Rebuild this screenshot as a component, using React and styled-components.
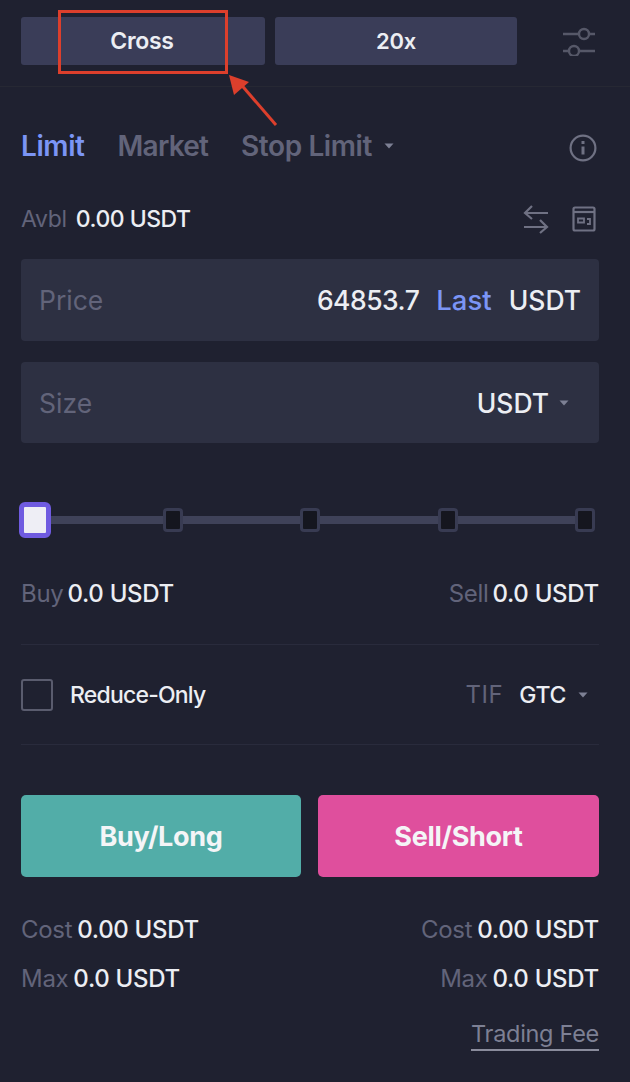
import React from "react";
import styled, { createGlobalStyle } from "styled-components";

const GlobalStyle = createGlobalStyle`
  html, body {
    margin: 0;
    padding: 0;
    background: #1f2130;
  }
  * {
    box-sizing: border-box;
  }
`;

const Caret = ({ color = "#7d8094" }) => (
  <CaretIcon width="10" height="6" viewBox="0 0 10 6">
    <path d="M0.5 0.5h9L5 5.5z" fill={color} />
  </CaretIcon>
);

const SliderIcon = () => (
  <svg width="36" height="30" viewBox="0 0 36 30" fill="none" stroke="#565868" strokeWidth="2.4">
    <path d="M2 8h16M28 8h6M2 25h6M18 25h16" />
    <circle cx="23" cy="8" r="5" />
    <circle cx="13" cy="25" r="5" />
  </svg>
);

const InfoIcon = () => (
  <svg width="28" height="28" viewBox="0 0 28 28" fill="none" stroke="#6f7183" strokeWidth="2.2">
    <circle cx="14" cy="14" r="12.4" />
    <path d="M14 12.5v8" strokeWidth="3" />
    <path d="M14 7v3" strokeWidth="3" />
  </svg>
);

const SwapIcon = () => (
  <svg width="28" height="30" viewBox="0 0 28 30" fill="none" stroke="#6f7183" strokeWidth="2.2">
    <path d="M26 9H3M10 2 3 9l7 6" />
    <path d="M2 23h23M18 16l7 7-7 6" />
  </svg>
);

const CalcIcon = () => (
  <svg width="24" height="26" viewBox="0 0 24 26" fill="none" stroke="#6f7183" strokeWidth="2.2">
    <rect x="1.5" y="1.5" width="21" height="23" rx="1.5" />
    <path d="M2 6h20" />
    <path d="M6 12.5h6v4H6zM15 13h3M15 18h3M18 12v7" strokeWidth="1.8" />
  </svg>
);

const App = () => {
  return (
    <>
      <GlobalStyle />
      <Panel>
        <TopBar>
          <MarginButton $width={244}>
            <CrossText>Cross</CrossText>
          </MarginButton>
          <MarginButton $width={242}>20x</MarginButton>
          <TopIcon>
            <SliderIcon />
          </TopIcon>
        </TopBar>

        <Callout />
        <CalloutArrow width="60" height="60" viewBox="0 0 60 60" fill="none">
          <path d="M50 50 12 6" stroke="#dc3f2c" strokeWidth="3" />
          <path d="M3 0l20 7-15 13z" fill="#dc3f2c" />
        </CalloutArrow>

        <Form>
          <Tabs>
            <Tab $active>Limit</Tab>
            <Tab $tight>Market</Tab>
            <Tab>
              Stop Limit <Caret />
            </Tab>
            <TabInfo>
              <InfoIcon />
            </TabInfo>
          </Tabs>

          <AvblRow>
            <AvblPair>
              <AvblLabel>Avbl</AvblLabel>
              <AvblValue>0.00 USDT</AvblValue>
            </AvblPair>
            <AvblIcons>
              <SwapIcon />
              <CalcIcon />
            </AvblIcons>
          </AvblRow>

          <Field>
            <FieldLabel>Price</FieldLabel>
            <FieldRight>
              <PriceValue>64853.7</PriceValue>
              <FieldLink>Last</FieldLink>
              <FieldValue>USDT</FieldValue>
            </FieldRight>
          </Field>
          <SizeField>
            <FieldLabel>Size</FieldLabel>
            <SizeRight>
              <FieldValue>USDT</FieldValue>
              <Caret />
            </SizeRight>
          </SizeField>

          <Slider>
            <Thumb />
            <Track />
            <Tick />
            <Track />
            <Tick />
            <Track />
            <Tick />
            <Track />
            <Tick />
          </Slider>

          <SplitRow>
            <SplitPair>
              <Label>Buy</Label>
              <Value>0.0 USDT</Value>
            </SplitPair>
            <SplitPair>
              <Label>Sell</Label>
              <Value>0.0 USDT</Value>
            </SplitPair>
          </SplitRow>

          <OptionsRow>
            <CheckWrap>
              <Checkbox />
              <CheckText>Reduce-Only</CheckText>
            </CheckWrap>
            <TifWrap>
              <TifLabel>TIF</TifLabel>
              <TifValue>GTC</TifValue>
              <Caret />
            </TifWrap>
          </OptionsRow>

          <Actions>
            <ActionButton $bg="#52ada8">Buy/Long</ActionButton>
            <ActionButton $bg="#df4f9d">Sell/Short</ActionButton>
          </Actions>

          <Summary>
            <SummaryRow>
              <Pair>
                <Label>Cost</Label>
                <Value>0.00 USDT</Value>
              </Pair>
              <Pair>
                <Label>Cost</Label>
                <Value>0.00 USDT</Value>
              </Pair>
            </SummaryRow>
            <SummaryRow>
              <Pair>
                <Label>Max</Label>
                <Value>0.0 USDT</Value>
              </Pair>
              <Pair>
                <Label>Max</Label>
                <Value>0.0 USDT</Value>
              </Pair>
            </SummaryRow>
          </Summary>

          <FeeRow>
            <FeeLink>Trading Fee</FeeLink>
          </FeeRow>
        </Form>
      </Panel>
    </>
  );
};

const Panel = styled.div`
  position: relative;
  width: 630px;
  height: 1082px;
  overflow: hidden;
  background: #1f2130;
  color: #eceef3;
  font-family: Inter, "Liberation Sans", sans-serif;
`;

const TopBar = styled.div`
  display: flex;
  align-items: flex-start;
  gap: 10px;
  height: 87px;
  padding: 17px 33px 0 21px;
  border-bottom: 1px solid #262833;
`;

const MarginButton = styled.div`
  flex: 0 0 ${(p) => p.$width}px;
  height: 48px;
  display: flex;
  align-items: center;
  justify-content: center;
  border-radius: 3px;
  background: #3a3d58;
  font-size: 22px;
  font-weight: 600;
  letter-spacing: -0.3px;
`;

const CrossText = styled.span`
  margin-right: 2px;
  font-size: 23px;
`;

const TopIcon = styled.div`
  margin-left: auto;
  height: 48px;
  display: flex;
  align-items: center;
`;

const Callout = styled.div`
  position: absolute;
  left: 58px;
  top: 10px;
  width: 170px;
  height: 64px;
  border: 3px solid #dc3f2c;
`;

const CalloutArrow = styled.svg`
  position: absolute;
  left: 226px;
  top: 75px;
`;

const Form = styled.div`
  padding: 0 31px 0 21px;
`;

const Tabs = styled.div`
  display: flex;
  align-items: center;
  gap: 33px;
  height: 40px;
  margin-top: 39px;
`;

const Tab = styled.div`
  display: flex;
  align-items: center;
  gap: 12px;
  font-size: 28px;
  font-weight: 600;
  letter-spacing: ${(p) => (p.$tight ? "-0.8px" : "-0.4px")};
  color: ${(p) => (p.$active ? "#7b95f5" : "#62647a")};
`;

const TabInfo = styled.div`
  margin-left: auto;
  margin-top: 4px;
  margin-right: 2px;
  display: flex;
`;

const CaretIcon = styled.svg`
  flex: none;
`;

const AvblRow = styled.div`
  display: flex;
  align-items: center;
  justify-content: space-between;
  height: 32px;
  margin-top: 37px;
`;

const AvblIcons = styled.div`
  display: flex;
  align-items: center;
  gap: 22px;
  margin-right: 3px;
`;

const Pair = styled.div`
  display: flex;
  align-items: baseline;
  gap: 5px;
  white-space: nowrap;
`;

const AvblPair = styled(Pair)`
  gap: 9px;
`;

const SplitPair = styled(Pair)`
  gap: 4px;
`;

const Label = styled.span`
  font-size: 24px;
  color: #62647a;
  letter-spacing: -0.3px;
`;

const AvblLabel = styled(Label)`
  font-size: 23px;
`;

const Value = styled.span`
  font-size: 24px;
  font-weight: 500;
  letter-spacing: -0.3px;
`;

const AvblValue = styled(Value)`
  font-size: 23px;
  letter-spacing: -0.5px;
`;

const Field = styled.div`
  display: flex;
  align-items: center;
  justify-content: space-between;
  height: 82px;
  margin-top: 24px;
  padding: 0 18px;
  border-radius: 4px;
  background: #2d3042;
`;

const SizeField = styled(Field)`
  height: 81px;
  margin-top: 21px;
  padding-right: 30px;
`;

const FieldLabel = styled.span`
  font-size: 26.5px;
  color: #62647a;
`;

const FieldRight = styled.div`
  display: flex;
  align-items: center;
  gap: 17px;
`;

const SizeRight = styled(FieldRight)`
  gap: 10px;
`;

const FieldValue = styled.span`
  font-size: 26.5px;
  font-weight: 500;
`;

const PriceValue = styled(FieldValue)`
  letter-spacing: -0.5px;
`;

const FieldLink = styled.span`
  font-size: 27.5px;
  font-weight: 500;
  color: #7b95f5;
`;

const Slider = styled.div`
  display: flex;
  align-items: center;
  height: 36px;
  margin: 59px 4px 0 -2px;
`;

const Thumb = styled.div`
  position: relative;
  z-index: 1;
  flex: none;
  width: 32px;
  height: 36px;
  margin-right: -5.5px;
  border: 5px solid #6f5be0;
  border-radius: 6px;
  background: #eeeef5;
`;

const Track = styled.div`
  flex: 1;
  height: 8px;
  background: #3f4259;
`;

const Tick = styled.div`
  flex: none;
  width: 20px;
  height: 24px;
  border: 3px solid #383b52;
  border-radius: 4px;
  background: #15161f;
`;

const SplitRow = styled.div`
  display: flex;
  align-items: center;
  justify-content: space-between;
  height: 36px;
  margin-top: 37px;
`;

const OptionsRow = styled.div`
  display: flex;
  align-items: center;
  justify-content: space-between;
  height: 101px;
  margin-top: 33px;
  border-top: 1px solid #292b3c;
  border-bottom: 1px solid #292b3c;
`;

const CheckWrap = styled.div`
  display: flex;
  align-items: center;
  gap: 17px;
`;

const Checkbox = styled.div`
  width: 32px;
  height: 32px;
  border: 2px solid #5a5c6e;
  border-radius: 3px;
`;

const CheckText = styled.span`
  font-size: 23px;
  font-weight: 500;
  letter-spacing: -0.8px;
`;

const TifWrap = styled.div`
  display: flex;
  align-items: center;
  gap: 16px;
  margin-right: 11px;
`;

const TifLabel = styled.span`
  font-size: 24px;
  letter-spacing: 0.5px;
  color: #62647a;
`;

const TifValue = styled.span`
  font-size: 23px;
  font-weight: 500;
  letter-spacing: -0.3px;
  margin-right: -4px;
`;

const Actions = styled.div`
  display: grid;
  grid-template-columns: 280px 281px;
  gap: 17px;
  margin-top: 50px;
`;

const ActionButton = styled.div`
  height: 82px;
  display: flex;
  align-items: center;
  justify-content: center;
  border-radius: 5px;
  background: ${(p) => p.$bg};
  font-size: 27px;
  font-weight: 700;
  letter-spacing: -0.3px;
  color: #f4f5f7;
`;

const Summary = styled.div`
  display: flex;
  flex-direction: column;
  gap: 13px;
  margin-top: 34px;
`;

const SummaryRow = styled.div`
  display: flex;
  align-items: center;
  justify-content: space-between;
  height: 36px;
`;

const FeeRow = styled.div`
  display: flex;
  justify-content: flex-end;
  margin-top: 23px;
`;

const FeeLink = styled.span`
  padding-bottom: 1px;
  border-bottom: 2px solid #8a8c9c;
  font-size: 23.5px;
  letter-spacing: -0.3px;
  color: #7d8094;
`;

export default App;
